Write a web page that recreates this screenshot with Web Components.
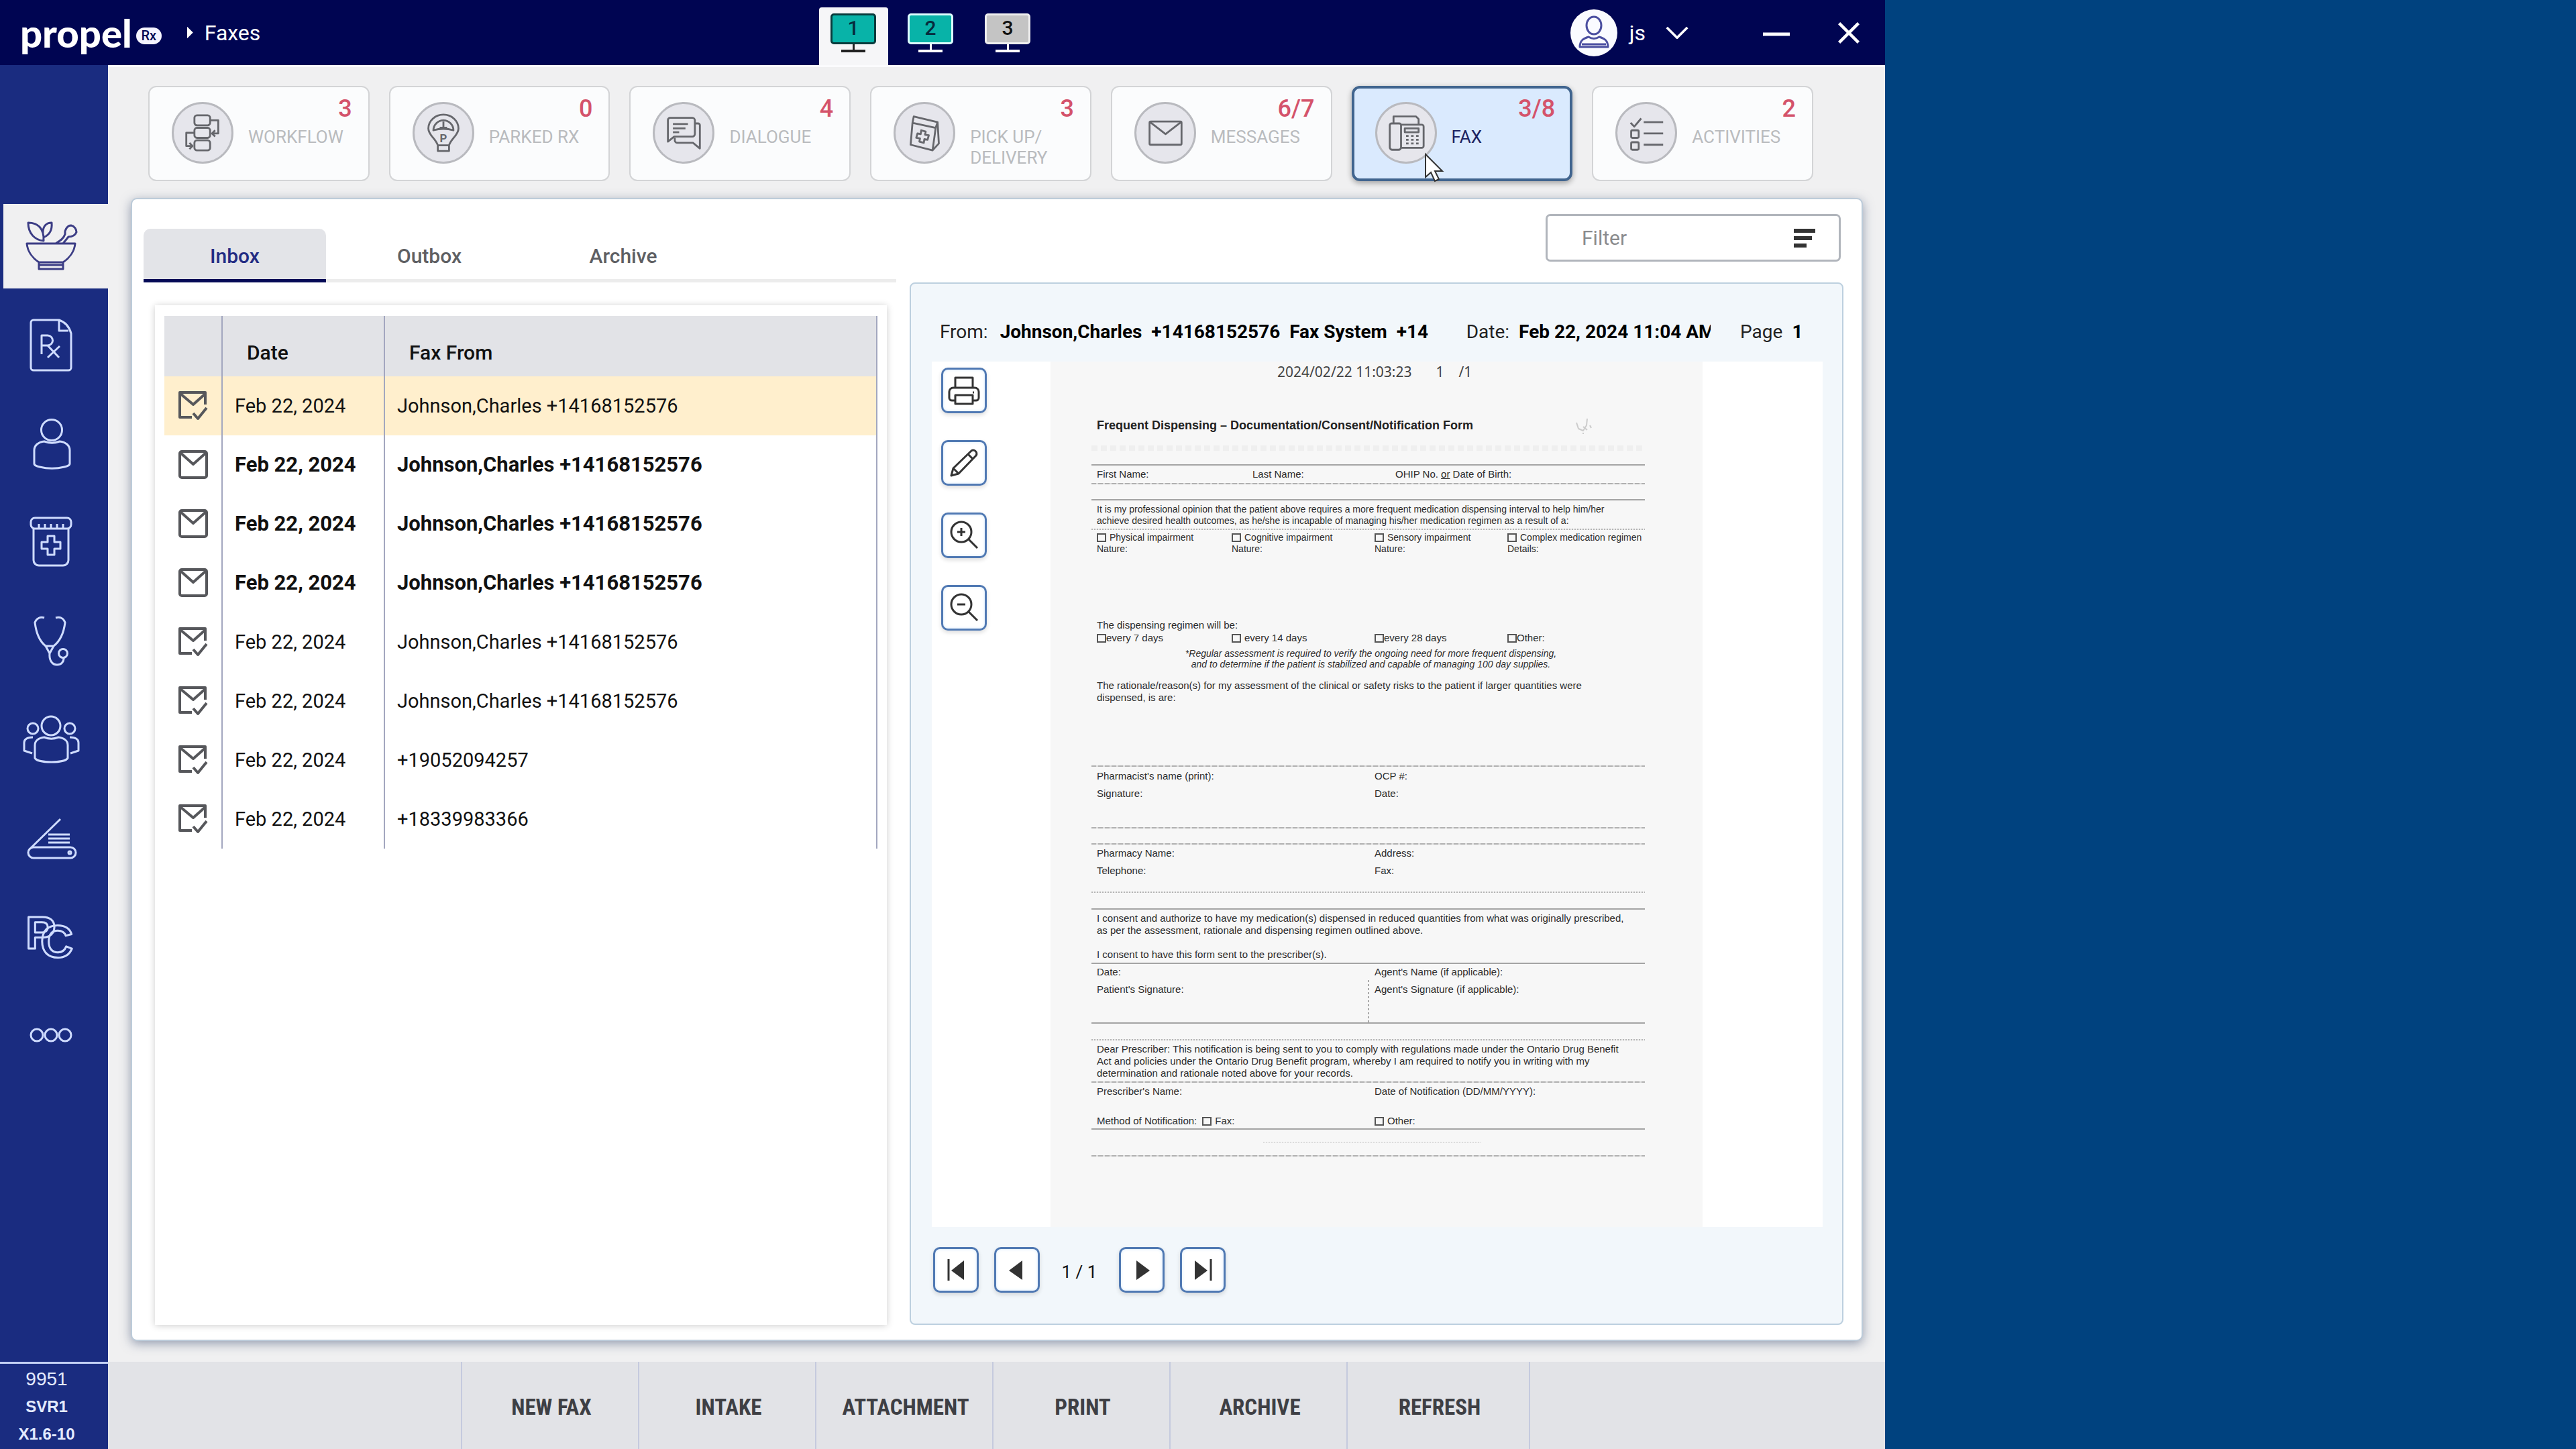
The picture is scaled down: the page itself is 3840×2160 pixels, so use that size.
<!DOCTYPE html>
<html lang="en">
<head>
<meta charset="utf-8">
<title>Faxes</title>
<style>
  html, body { margin: 0; height: 100%; }
  body { font-family: Roboto, "Liberation Sans", sans-serif; background: #00427f; color: #111; }
</style>
</head>
<body>
<fax-app></fax-app>
<script>
const define = (name, html, setup) => {
  const tpl = document.createElement('template');
  tpl.innerHTML = '<style>*{box-sizing:border-box}button{font:inherit;color:inherit;background:none;border:0;padding:0;margin:0;cursor:pointer}a{color:inherit;text-decoration:none}</style>' + html;
  customElements.define(name, class extends HTMLElement {
    constructor() {
      super();
      this.attachShadow({ mode: 'open' }).append(tpl.content.cloneNode(true));
    }
    connectedCallback() { if (setup) setup(this, this.shadowRoot); }
  });
};

/* ---------- icons ---------- */
const ICONS = {
  workflow: ['0 0 92 92', '<rect x="33" y="18" width="25" height="16" rx="4"/><rect x="33" y="38" width="25" height="16" rx="4"/><rect x="33" y="58" width="25" height="16" rx="4"/><path d="M58 26h13v21h-9M66 42l-5 5 5 5M33 46H20v21h9M25 62l5 5-5 5"/>'],
  parked: ['0 0 92 92', '<path d="M37 66C34 55 22 50 22 39a24 22 0 0 1 48 0c0 11-12 16-15 27zM37 66v9h18v-9"/><path d="M30 42a16 16 0 0 1 32 0c-10-3-22-3-32 0zM46 28v10M40 38h12"/><text x="46" y="61" text-anchor="middle" font-size="18" font-weight="700" fill="currentColor" stroke="none">P</text>'],
  dialogue: ['0 0 92 92', '<path d="M24 22h36a4 4 0 0 1 4 4v22a4 4 0 0 1-4 4H31l-10 8V26a4 4 0 0 1 3-4zM64 31h5a3 3 0 0 1 3 3v37L61 62H36a4 4 0 0 1-4-4v-4M29 32h24M29 39h20M29 45h10"/>'],
  pickup: ['0 0 92 92', '<path d="M29 20l38 9-3 9-37-8zM27 30l-3 35 35 9 5-36M67 29l2 34-10 11M41 42l7 2-1 5 6 1-2 7-5-1-1 6-7-2 1-5-6-1 2-7 5 1z"/>'],
  messages: ['0 0 92 92', '<rect x="21" y="28" width="51" height="37" rx="2"/><path d="M22 29l24.500 19L71 29"/>'],
  fax: ['0 0 92 92', '<path d="M26 31V20h36l4 4v9M26 31h-3a3 3 0 0 0-3 3v35a4 4 0 0 0 4 4h10a4 4 0 0 0 4-4V34a3 3 0 0 0-3-3zM38 33h33a3 3 0 0 1 3 3v31a3 3 0 0 1-3 3H38M44 39h22v6H44zM46 51h4M54 51h4M62 51h4M46 57h4M54 57h4M62 57h4M46 63h4M54 63h4M62 63h4"/>'],
  activities: ['0 0 92 92', '<path d="M21 30l6 6 11-13M42 29h31M42 47h31M42 65h31"/><rect x="22" y="42" width="12" height="12" rx="2"/><rect x="22" y="61" width="12" height="12" rx="2"/>'],
  mortar: ['0 0 84 84', '<path d="M7 7c14 0 24 8 23 27C17 33 7 23 7 7zM29 22c0-10 5-15 13-15 1 10-3 18-12 22M48 38c8-5 12-8 14-14-1-7 4-13 9-13 5 1 8 6 8 10-2 5-7 7-12 7-3 4-5 6-8 10M5 38h72c-1 12-9 22-18 28H23C14 60 6 50 5 38zM23 66h36v10H23zM24 70h34"/>'],
  rxdoc: ['0 0 84 84', '<path d="M53 5H15a4 4 0 0 0-4 4v67a4 4 0 0 0 4 4h52a4 4 0 0 0 4-4V25C68 14 62 8 53 5v16h14M27 56V28h9a7 7 0 0 1 0 15h-9M36 43l17 18M54 44L36 61"/>'],
  person: ['0 0 84 84', '<circle cx="42" cy="22" r="15.500"/><path d="M31 39c-9 1-15 6-15 13v20c0 3 4 4 8 5 12 3 25 3 37 0 4-1 8-2 8-5V52c0-7-6-12-15-13-8 3-15 3-23 0z"/>'],
  jar: ['0 0 84 84', '<rect x="11" y="6" width="60" height="16" rx="6"/><path d="M15 22v47a8 8 0 0 0 8 8h36a8 8 0 0 0 8-8V22M23 22v-7M32 22v-7M41 22v-7M50 22v-7M59 22v-7M36 33h10v9h9v10h-9v9H36v-9h-9V42h9z"/>'],
  steth: ['0 0 84 84', '<path d="M31 8c-6-2-12 1-14 7 2 16 7 28 16 35h12c9-7 15-19 17-35-2-6-7-9-14-7M33 50l6 11 6-11M39 61c-1 9 3 17 11 17 6 0 10-4 10-10"/><circle cx="59" cy="61" r="6.500"/>'],
  group: ['0 0 84 84', '<circle cx="41" cy="22" r="14"/><circle cx="14" cy="26" r="8"/><circle cx="69" cy="26" r="8"/><path d="M31 39c-8 1-14 5-14 12v19c4 8 45 8 49 0V51c0-7-6-11-14-12-7 3-14 3-21 0zM14 39C6 39 1 42 1 47v12l12 4M69 39c8 0 13 3 13 8v12l-12 4"/>'],
  scanner: ['0 0 84 84', '<path d="M55 14L11 57M37 37h32M37 43h32M37 49h32"/><rect x="7" y="56" width="71" height="16" rx="8"/><circle cx="69" cy="64" r="2"/>'],
  pc: ['0 0 84 84', '<g font-family="Liberation Sans" font-weight="700" font-size="68"><text x="3" y="60">P</text><text x="25" y="73">C</text></g>'],
  more: ['0 0 84 84', '<circle cx="20" cy="42" r="9"/><circle cx="41" cy="42" r="9"/><circle cx="62" cy="42" r="9"/>'],
  user: ['0 0 70 70', '<ellipse cx="35" cy="24" rx="11" ry="13"/><path d="M14 56c0-10 6-13 13-15 5 3 11 3 16 0 7 2 13 5 13 15zM17 52h36"/>'],
  chevron: ['0 0 40 24', '<path d="M3 3l17 17L37 3"/>'],
  minimise: ['0 0 40 40', '<path d="M0 22h40"/>'],
  close: ['0 0 40 40', '<path d="M4 4l32 32M36 4L4 36"/>'],
  sort: ['0 0 32 28', '<path d="M0 3h32M0 14h27M0 25h19"/>'],
  print: ['0 0 68 68', '<path d="M21 30V15h26v15M21 49h-5a4 4 0 0 1-4-4V36a6 6 0 0 1 6-6h32a6 6 0 0 1 6 6v9a4 4 0 0 1-4 4h-5M21 41h26v13H21zM47 37h2"/>'],
  pencil: ['0 0 68 68', '<path d="M15 53l3-11 27-26c4-3 10 2 7 7L26 50zM40 21l8 8M18 42l8 8"/>'],
  zoomin: ['0 0 68 68', '<circle cx="30" cy="29" r="15"/><path d="M41 40l13 13M30 23v12M24 29h12"/>'],
  zoomout: ['0 0 68 68', '<circle cx="30" cy="29" r="15"/><path d="M41 40l13 13M24 29h12"/>'],
  first: ['0 0 68 68', '<path d="M23 18v32"/><path fill="currentColor" stroke="none" d="M46 20v29L27 35z"/>'],
  prev: ['0 0 68 68', '<path fill="currentColor" stroke="none" d="M42 20v29L22 35z"/>'],
  next: ['0 0 68 68', '<path fill="currentColor" stroke="none" d="M26 20v29l20-14z"/>'],
  last: ['0 0 68 68', '<path d="M46 18v32"/><path fill="currentColor" stroke="none" d="M22 20v29l19-14z"/>'],
  unread: ['0 0 44 44', '<rect x="2" y="2" width="40" height="39" rx="3"/><path d="M3 4l19 17L41 4"/>'],
  read: ['0 0 44 44', '<path d="M20 39H2V2h38v18M3 4l19 16L40 4M22 33l7 8 13-16"/>'],
  smudge: ['0 0 26 28', '<path d="M2 10l3 9 7 3 5-8 1-10M12 16l6 5M22 14l2 4M11 26h2"/>'],
};
define('ui-icon', '<style>:host{display:block;line-height:0}svg{display:block;width:100%;height:100%;overflow:visible;fill:none;stroke:currentColor;stroke-width:var(--stroke,3);stroke-linejoin:round}</style><svg aria-hidden="true"></svg>', (el, root) => {
  const [box, body] = ICONS[el.getAttribute('name')];
  const svg = root.querySelector('svg');
  svg.setAttribute('viewBox', box);
  svg.innerHTML = body;
});

/* ---------- title bar ---------- */
define('workspace-tab', `<style>
  :host{display:block}
  button{display:flex;flex-direction:column;align-items:center;width:103px;height:86px;padding-top:9px;color:#fff}
  .screen{width:68px;height:46px;border:3px solid #dff;border-radius:5px;background:#08b3a8;color:#062a3c;font-size:30px;line-height:38px;font-weight:500}
  .neck{width:3px;height:8px;background:currentColor}
  .foot{width:36px;height:4px;background:currentColor}
  :host([idle]) .screen{background:#c4c4c4;color:#111;border-color:#eee}
  :host([active]) button{background:#f6f6f8;border-radius:4px 4px 0 0;color:#222}
  :host([active]) .screen{border-color:#083b3c}
</style><button><span class="screen"><slot></slot></span><span class="neck"></span><span class="foot"></span></button>`);

define('title-bar', `<style>
  :host{display:grid;grid-template-columns:1fr auto 1fr;align-items:center;height:97px;padding-right:36px;background:#000552;color:#fff}
  .brand{display:flex;align-items:center;padding-left:30px}
  .logo{font:900 58px/60px Lato,sans-serif}
  .rx{width:38px;height:25px;margin:10px 0 0 6px;border-radius:13px;background:#f4f4ff;color:#000552;font-size:20px;line-height:25px;font-weight:500;text-align:center}
  .caret{width:9px;height:18px;margin:0 17px 0 38px;background:#fff;clip-path:polygon(0 0,100% 50%,0 100%)}
  .crumb{font-size:32px;line-height:40px}
  .tabs{display:flex;gap:12px;align-self:end}
  .user{display:flex;align-items:center;justify-content:flex-end}
  .avatar{width:70px;height:70px;border-radius:50%;background:#fafbff;color:#4b4fa0}
  .user button{display:flex;align-items:center}
  .name{font-size:32px;line-height:40px;margin:0 29px 0 18px}
  .chev{width:36px;height:22px;--stroke:4}
  .min{width:40px;height:40px;margin:0 70px 0 110px;--stroke:5}
  .close{width:36px;height:36px;--stroke:5}
  .min,.close{display:block}
</style>
<div class="brand"><span class="logo">propel</span><span class="rx">Rx</span><span class="caret"></span><span class="crumb">Faxes</span></div>
<nav class="tabs"><workspace-tab active>1</workspace-tab><workspace-tab>2</workspace-tab><workspace-tab idle>3</workspace-tab></nav>
<div class="user"><button><ui-icon class="avatar" name="user"></ui-icon><span class="name">js</span><ui-icon class="chev" name="chevron"></ui-icon></button>
<button aria-label="Minimise"><ui-icon class="min" name="minimise"></ui-icon></button><button aria-label="Close"><ui-icon class="close" name="close"></ui-icon></button></div>`);

/* ---------- side navigation ---------- */
define('nav-item', `<style>
  :host{display:block}
  a{display:flex;align-items:center;justify-content:center;height:126px;padding-right:12px;margin-left:5px;color:#cfdcff}
  ui-icon{width:84px;height:84px;--stroke:3}
  :host([active]) a{background:#f0f0f1;color:#3c3d85}
</style><a href="#"></a>`, (el, root) => {
  const link = root.querySelector('a');
  link.setAttribute('aria-label', el.getAttribute('icon'));
  link.innerHTML = '<ui-icon name="' + el.getAttribute('icon') + '"></ui-icon>';
});
define('side-nav', `<style>
  :host{display:flex;flex-direction:column;justify-content:space-between;background:#1a2c80;color:#e3eaff}
  nav{display:flex;flex-direction:column;gap:21px;padding-top:207px}
  .server{height:130px;padding:2px 22px 0 0;border-top:3px solid #c3d0f5;text-align:center;font:700 24px/41px "Liberation Sans",sans-serif}
  .server div:first-child{font-size:28px;font-weight:400}
</style><nav><nav-item icon="mortar" active></nav-item><nav-item icon="rxdoc"></nav-item><nav-item icon="person"></nav-item><nav-item icon="jar"></nav-item><nav-item icon="steth"></nav-item><nav-item icon="group"></nav-item><nav-item icon="scanner"></nav-item><nav-item icon="pc"></nav-item><nav-item icon="more"></nav-item></nav>
<div class="server"><div>9951</div><div>SVR1</div><div>X1.6-10</div></div>`);

/* ---------- module tiles ---------- */
define('module-tile', `<style>
  :host{display:block;position:relative}
  button{display:grid;grid-template-columns:92px 1fr;gap:0 22px;width:100%;height:142px;padding:0 24px 0 33px;text-align:left;background:#fbfcfd;border:2px solid #d3d4d6;border-radius:12px;color:#b9bbbe}
  .icon{width:92px;height:92px;margin-top:22px;border:3px solid #b9babf;border-radius:50%;background:#e6e6ec;color:#66676c}
  .text{display:flex;flex-direction:column}
  .count{padding-top:12px;text-align:right;font-size:36px;line-height:40px;font-weight:500;color:#d4536b}
  .label{font-size:26px;line-height:31px;margin-top:7px;white-space:nowrap}
  :host([active]) button{background:#daeafe;border:4px solid #41658f;padding:0 22px 0 31px;box-shadow:0 3px 8px #0005}
  :host([active]) .icon{margin-top:20px}
  :host([active]) .count{padding-top:10px}
  :host([active]) .label{color:#1c2260}
  .pointer{display:none;position:absolute;left:108px;top:100px;width:30px;height:44px;overflow:visible}
  :host([active]) .pointer{display:block}
</style><button><span class="icon"></span><span class="text"><span class="count"></span><span class="label"><slot></slot></span></span></button>
<svg class="pointer" viewBox="0 0 30 44"><path d="M2 2v34l8-7 6 13 6-3-6-12h11z" fill="#fff" stroke="#333" stroke-width="2"/></svg>`, (el, root) => {
  root.querySelector('.count').textContent = el.getAttribute('count');
  root.querySelector('.icon').innerHTML = '<ui-icon name="' + el.getAttribute('icon') + '" style="width:86px;height:86px"></ui-icon>';
});

/* ---------- inbox ---------- */
define('box-tabs', `<style>
  :host{display:grid;grid-template-columns:272px 308px 270px 1fr;border-bottom:5px solid #ececec;height:80px}
  button{height:80px;font-size:30px;font-weight:500;color:#5e5f63}
  .on{background:#e3e4e8;color:#232c83;padding-top:5px;border-bottom:5px solid #050a56;border-radius:10px 10px 0 0}
</style><button class="on">Inbox</button><button>Outbox</button><button>Archive</button>`);

define('filter-box', `<style>
  :host{display:block}
  label{display:flex;align-items:center;width:440px;height:71px;padding:0 35px 0 49px;border:3px solid #b1b5bc;border-radius:7px;background:#fff}
  input{flex:1;min-width:0;border:0;outline:0;background:none;font:30px/40px Roboto,sans-serif;color:#333}
  input::placeholder{color:#8a8b8e;opacity:1}
  ui-icon{width:32px;height:28px;color:#333;--stroke:6}
</style><label aria-label="Filter faxes"><input type="text" placeholder="Filter"><ui-icon name="sort"></ui-icon></label>`);

define('fax-list', `<style>
  :host{display:block;padding:16px 14px;background:#fff;box-shadow:0 1px 10px #0003}
  table{width:100%;border-collapse:collapse;table-layout:fixed;font-size:29px;line-height:36px}
  th,td{padding:0 18px;text-align:left;font-weight:400;border-right:2px solid #a3a7bf}
  th{height:90px;padding:20px 36px 0;background:#e2e3e7;font-size:30px;font-weight:500}
  td{height:88px}
  td:first-child{padding:0 0 0 21px}
  .sel td{background:#ffefcd}
  .new td{font-size:31px;font-weight:700}
  ui-icon{width:44px;height:44px;color:#56575b;--stroke:4}
</style><table><colgroup><col style="width:86px"><col style="width:242px"><col></colgroup><thead><tr><th></th><th>Date</th><th>Fax From</th></tr></thead><tbody></tbody></table>`, (el, root) => {
  const name = 'Johnson,Charles +14168152576';
  const rows = [['sel', name], ['new', name], ['new', name], ['new', name], ['', name], ['', name], ['', '+19052094257'], ['', '+18339983366']];
  root.querySelector('tbody').innerHTML = rows.map(([cls, from]) =>
    '<tr class="' + cls + '"><td><ui-icon name="' + (cls === 'new' ? 'unread' : 'read') + '"></ui-icon></td><td>Feb 22, 2024</td><td>' + from + '</td></tr>').join('');
});

/* ---------- preview ---------- */
define('tool-button', `<style>
  :host{display:block}
  button{display:block;width:68px;height:68px;border:3px solid #5079b3;border-radius:10px;background:#fff;color:#333;box-shadow:0 3px 6px #0002,inset 0 0 4px #9cf6}
  ui-icon{width:68px;height:68px;margin:-3px}
</style><button></button>`, (el, root) => {
  const button = root.querySelector('button');
  button.setAttribute('aria-label', el.getAttribute('icon'));
  button.innerHTML = '<ui-icon name="' + el.getAttribute('icon') + '"></ui-icon>';
});

define('form-rule', `<style>
  :host{display:block;height:2px;background:#a4a4a4}
  :host([dashed]){background:repeating-linear-gradient(90deg,#b0b0b0 0 7px,#dcdcdc 7px 10px)}
  :host([dotted]){background:repeating-linear-gradient(90deg,#b4b4b4 0 2px,#eee 2px 4px)}
  :host([faint]){height:8px;background:repeating-linear-gradient(90deg,#efefef 0 9px,#f7f7f7 9px 14px)}
</style>`);
define('form-check', `<style>
  :host{display:block}
  label{display:flex;align-items:center;gap:5px}
  :host([tight]) label{gap:0}
  input{appearance:none;width:14px;height:13px;margin:0;border:2px solid #555;background:none}
</style><label><input type="checkbox"><slot></slot></label>`);

define('fax-document', `<style>
  :host{display:flex;flex-direction:column;background:#f7f7f7;padding:0 86px 0 61px;color:#2c2c2c;white-space:nowrap;font:15px/18px "Liberation Sans",sans-serif}
  .stamp{display:flex;gap:36px;padding-left:277px;font:21px/30px "Noto Sans",sans-serif;color:#444}
  .stamp span+span+span{margin-left:-14px}
  .head{display:flex;justify-content:space-between;align-items:center;height:24px;margin-top:53px;padding:0 78px 0 8px}
  .head ui-icon{width:26px;height:28px;color:#ccc;--stroke:2}
  h2{margin:0;font-size:18px;line-height:24px;color:#222}
  p{margin:0;padding-left:8px}
  .row{display:grid;padding-left:8px}
  .two{grid-template-columns:414px 1fr;row-gap:8px}
  .three{grid-template-columns:232px 213px 1fr}
  .four{grid-template-columns:201px 213px 198px 1fr}
  .sm{font-size:14px;line-height:17px}
  .it{font-size:14px;line-height:16px;font-style:italic;text-align:center}
  .sign{height:87px;align-content:start;background:repeating-linear-gradient(0deg,#aaa 0 3px,#f7f7f7 3px 6px) 412px 24px/2px 63px no-repeat}
  .method{display:flex;gap:8px}
</style>
<div class="stamp"><span>2024/02/22 11:03:23</span><span>1</span><span>/1</span></div>
<div class="head"><h2>Frequent Dispensing – Documentation/Consent/Notification Form</h2><ui-icon name="smudge"></ui-icon></div>
<form-rule faint style="margin-top:18px"></form-rule>
<form-rule style="margin-top:20px"></form-rule>
<div class="row three" style="margin-top:4px"><span>First Name:</span><span>Last Name:</span><span>OHIP No. <u>or</u> Date of Birth:</span></div>
<form-rule dashed style="margin-top:4px"></form-rule>
<form-rule style="margin-top:22px"></form-rule>
<p class="sm" style="margin-top:5px">It is my professional opinion that the patient above requires a more frequent medication dispensing interval to help him/her<br>achieve desired health outcomes, as he/she is incapable of managing his/her medication regimen as a result of a:</p>
<form-rule dotted style="margin-top:3px"></form-rule>
<div class="row four sm" style="margin-top:3px"><form-check>Physical impairment</form-check><form-check>Cognitive impairment</form-check><form-check>Sensory impairment</form-check><form-check>Complex medication regimen</form-check><span>Nature:</span><span>Nature:</span><span>Nature:</span><span>Details:</span></div>
<p style="margin-top:96px">The dispensing regimen will be:</p>
<div class="row four" style="margin-top:1px"><form-check tight>every 7 days</form-check><form-check>every 14 days</form-check><form-check tight>every 28 days</form-check><form-check tight>Other:</form-check></div>
<p class="it" style="margin-top:6px">*Regular assessment is required to verify the ongoing need for more frequent dispensing,<br>and to determine if the patient is stabilized and capable of managing 100 day supplies.</p>
<p style="margin-top:15px">The rationale/reason(s) for my assessment of the clinical or safety risks to the patient if larger quantities were<br>dispensed, is are:</p>
<form-rule dashed style="margin-top:92px"></form-rule>
<div class="row two" style="margin-top:5px"><span>Pharmacist's name (print):</span><span>OCP #:</span><span>Signature:</span><span>Date:</span></div>
<form-rule dashed style="margin-top:41px"></form-rule>
<form-rule dashed style="margin-top:22px"></form-rule>
<div class="row two" style="margin-top:4px"><span>Pharmacy Name:</span><span>Address:</span><span>Telephone:</span><span>Fax:</span></div>
<form-rule dotted style="margin-top:22px"></form-rule>
<form-rule style="margin-top:23px"></form-rule>
<p style="margin-top:4px">I consent and authorize to have my medication(s) dispensed in reduced quantities from what was originally prescribed,<br>as per the assessment, rationale and dispensing regimen outlined above.</p>
<p style="margin-top:18px">I consent to have this form sent to the prescriber(s).</p>
<form-rule style="margin-top:3px"></form-rule>
<div class="row two sign" style="padding-top:3px"><span>Date:</span><span>Agent's Name (if applicable):</span><span>Patient's Signature:</span><span>Agent's Signature (if applicable):</span></div>
<form-rule></form-rule>
<form-rule dotted style="margin-top:23px"></form-rule>
<p style="margin-top:4px">Dear Prescriber: This notification is being sent to you to comply with regulations made under the Ontario Drug Benefit<br>Act and policies under the Ontario Drug Benefit program, whereby I am required to notify you in writing with my<br>determination and rationale noted above for your records.</p>
<form-rule dashed style="margin-top:3px"></form-rule>
<div class="row two" style="margin-top:4px;row-gap:26px"><span>Prescriber's Name:</span><span>Date of Notification (DD/MM/YYYY):</span><span class="method">Method of Notification: <form-check>Fax:</form-check></span><form-check>Other:</form-check></div>
<form-rule style="margin-top:2px"></form-rule>
<form-rule dotted style="margin:18px 244px 0 256px;opacity:.4"></form-rule>
<form-rule dashed style="margin-top:18px"></form-rule>`);

define('fax-preview', `<style>
  :host{display:flex;flex-direction:column;background:#f2f7fb;border:2px solid #bdd0df;border-radius:8px;padding:0 29px 46px 31px}
  .meta{display:flex;align-items:center;gap:14px;height:116px;padding:27px 0 0 12px;font-size:28px;line-height:36px;white-space:nowrap;color:#222}
  .meta b{font-weight:700;color:#000;overflow:hidden;white-space:pre}
  .from{width:650px;margin:0 31px 0 4px}.date{width:286px;margin-right:30px}
  .viewer{display:grid;grid-template-columns:177px 972px 1fr;flex:1;background:#fff}
  .tools{display:flex;flex-direction:column;gap:40px;padding:9px 0 0 14px}
  .pager{display:flex;align-items:center;gap:23px;padding:30px 0 0 2px}
  .page{width:72px;padding-top:6px;text-align:center;font-size:26px;line-height:36px}
</style>
<div class="meta"><span>From:</span><b class="from">Johnson,Charles  +14168152576  Fax System  +14</b><span>Date:</span><b class="date">Feb 22, 2024 11:04 AM</b><span>Page</span><b>1</b></div>
<div class="viewer"><div class="tools"><tool-button icon="print"></tool-button><tool-button icon="pencil"></tool-button><tool-button icon="zoomin"></tool-button><tool-button icon="zoomout"></tool-button></div><fax-document></fax-document></div>
<div class="pager"><tool-button icon="first"></tool-button><tool-button icon="prev"></tool-button><span class="page">1 / 1</span><tool-button icon="next"></tool-button><tool-button icon="last"></tool-button></div>`);

/* ---------- footer ---------- */
define('action-bar', `<style>
  :host{display:grid;grid-template-columns:526px repeat(5,264px) 272px 1fr;height:130px;background:#e2e3e7}
  button{border-left:2px solid #c5cade;font:700 33px/40px "Liberation Sans Narrow","Roboto Condensed",Roboto,sans-serif;color:#3e3f44;padding:6px 0 0 4px}
  .end{border-left:2px solid #c5cade}
</style><span></span><button>NEW FAX</button><button>INTAKE</button><button>ATTACHMENT</button><button>PRINT</button><button>ARCHIVE</button><button>REFRESH</button><span class="end"></span>`);

define('fax-app', `<style>
  :host{display:grid;grid-template-columns:1fr 1030px;min-height:100vh}
  .window{display:grid;grid-template:auto 1fr/161px 1fr;min-width:0;background:#f0f0f1}
  title-bar{grid-column:1/-1}
  .main{display:flex;flex-direction:column;min-width:0;border-top:3px solid #fbfbfd}
  .modules{display:grid;grid-template-columns:repeat(7,1fr);gap:29px;padding:28px 107px 0 60px}
  .panel{display:grid;grid-template-columns:1142px 1fr;grid-template-rows:124px 1fr;flex:1;margin:25px 33px 31px 34px;background:#fff;border:2px solid #bccbd9;border-radius:9px;box-shadow:0 4px 16px #44557788}
  box-tabs{margin:44px 3px 0 17px}
  filter-box{justify-self:end;margin:22px 31px 0 0}
  fax-list{margin:34px 17px 22px 34px}
  fax-preview{margin:0 27px 22px 17px}
</style>
<div class="window"><title-bar></title-bar><side-nav></side-nav>
<div class="main">
  <div class="modules"><module-tile icon="workflow" count="3">WORKFLOW</module-tile><module-tile icon="parked" count="0">PARKED RX</module-tile><module-tile icon="dialogue" count="4">DIALOGUE</module-tile><module-tile icon="pickup" count="3">PICK UP/<br>DELIVERY</module-tile><module-tile icon="messages" count="6/7">MESSAGES</module-tile><module-tile icon="fax" count="3/8" active>FAX</module-tile><module-tile icon="activities" count="2">ACTIVITIES</module-tile></div>
  <div class="panel"><box-tabs></box-tabs><filter-box></filter-box><fax-list></fax-list><fax-preview></fax-preview></div>
  <action-bar></action-bar>
</div></div>`);
</script>
</body>
</html>
